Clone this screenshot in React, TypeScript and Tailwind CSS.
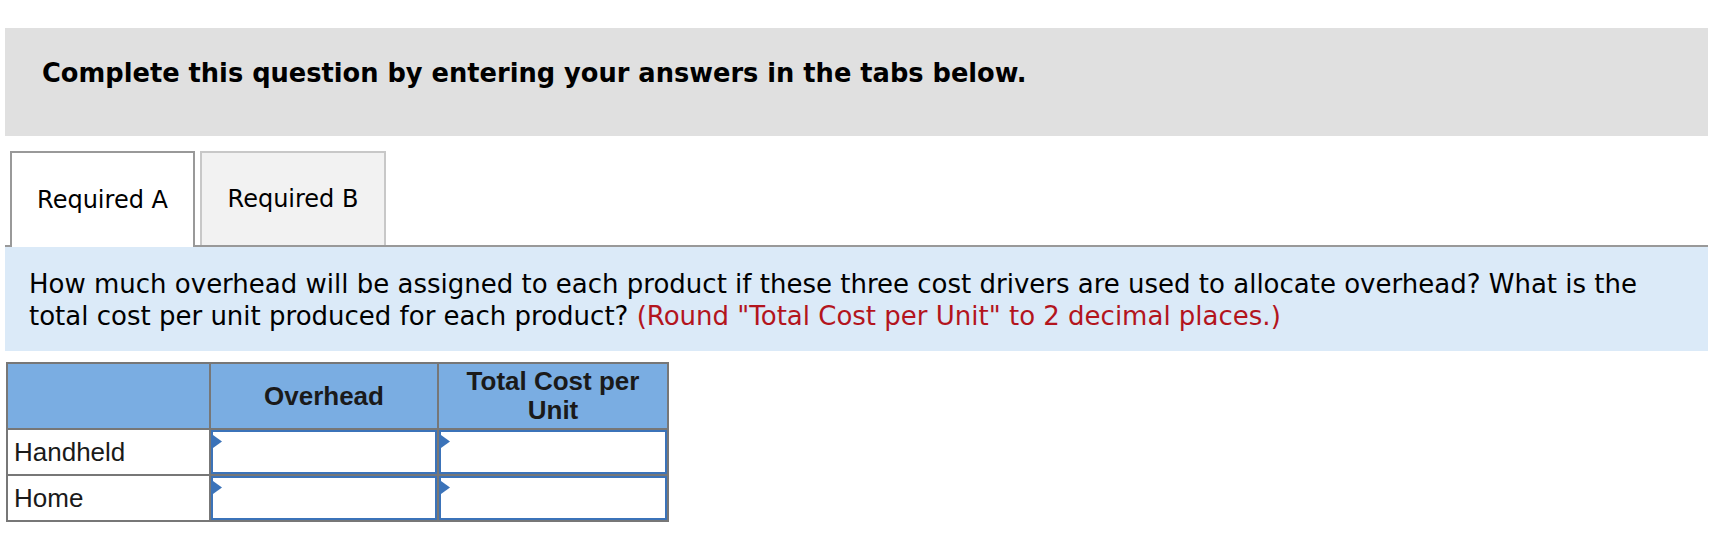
const verdana = { fontFamily: '"DejaVu Sans", Verdana, sans-serif' };

function InputCell() {
  return (
    <td className="border-2 border-[#777777] p-0 align-top">
      <div className="relative h-[44px] border-2 border-[#3b73b9] bg-white">
        <svg className="absolute left-0 top-[3px]" width="9" height="13" viewBox="0 0 9 13">
          <polygon points="0,0 9,6.5 0,13" fill="#3b73b9" />
        </svg>
      </div>
    </td>
  );
}

export default function App() {
  const rows = ['Handheld', 'Home'];
  return (
    <div className="bg-white w-[1734px] h-[534px] pt-[28px] pl-[5px]">
      <div className="w-[1703px]">
        {/* Instructions */}
        <div className="bg-[#e0e0e0] h-[108px] pl-[37px] pt-[28px]">
          <h1 className="text-[25.7px] leading-[34px] font-bold text-black" style={verdana}>
            Complete this question by entering your answers in the tabs below.
          </h1>
        </div>

        {/* Tabs */}
        <div className="flex items-end gap-[5px] mt-[15px] border-b-2 border-[#999999] pl-[5px]">
          <div
            className="w-[185px] h-[96px] -mb-[2px] bg-white border-2 border-b-0 border-[#999999] flex items-center justify-center text-[24px] text-black"
            style={verdana}
          >
            Required A
          </div>
          <div
            className="w-[186px] h-[94px] bg-[#f2f2f2] border-2 border-b-0 border-[#c8c8c8] flex items-center justify-center text-[24px] text-black"
            style={verdana}
          >
            Required B
          </div>
        </div>

        {/* Question */}
        <div className="bg-[#dbeaf8] h-[104px] pl-[24px] pt-[21px]">
          <p className="text-[26px] leading-[32px] text-black whitespace-nowrap" style={verdana}>
            How much overhead will be assigned to each product if these three cost drivers are used to allocate overhead? What is the
            <br />
            total cost per unit produced for each product?{' '}
            <span className="text-[#b3151d]">(Round "Total Cost per Unit" to 2 decimal places.)</span>
          </p>
        </div>

        {/* Answer table */}
        <table
          className="mt-[11px] ml-[1px] border-collapse border-2 border-[#777777] text-black"
          style={{ fontFamily: '"Liberation Sans", Arial, sans-serif' }}
        >
          <thead>
            <tr className="bg-[#7aade2] h-[66px]">
              <th className="w-[203px] border-2 border-[#777777]"></th>
              <th className="w-[228px] border-2 border-[#777777] text-[26px] leading-[29px] font-bold text-[#1a1a1a]">
                Overhead
              </th>
              <th className="w-[230px] border-2 border-[#777777] text-[26px] leading-[29px] font-bold text-[#1a1a1a]">
                Total Cost per
                <br />
                Unit
              </th>
            </tr>
          </thead>
          <tbody>
            {rows.map((r) => (
              <tr key={r}>
                <td className="border-2 border-[#777777] pl-[6px] text-[26px] leading-[27px] text-[#1a1a1a] bg-white">
                  {r}
                </td>
                <InputCell />
                <InputCell />
              </tr>
            ))}
          </tbody>
        </table>
      </div>
    </div>
  );
}
